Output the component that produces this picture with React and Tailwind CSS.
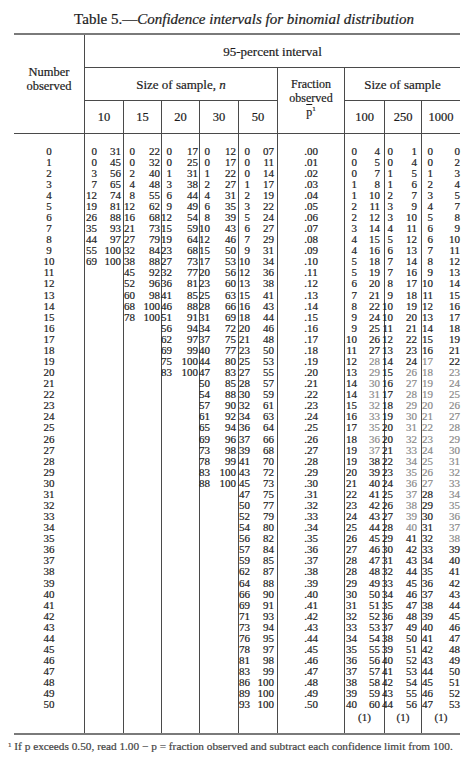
import React from 'react'

// rows are "lower-upper" pairs, one per number observed
const parse = (s) => s.split(',').map((p) => p.split('-'))

const LEFT = [
  { n: '10', slot: 12, pr: 2, data: parse('0-31,0-45,3-56,7-65,12-74,19-81,26-88,35-93,44-97,55-100,69-100') },
  { n: '15', slot: 11, pr: 1, data: parse('0-22,0-32,2-40,4-48,8-55,12-62,16-68,21-73,27-79,32-84,38-88,45-92,52-96,60-98,68-100,78-100') },
  { n: '20', slot: 10, pr: 1, data: parse('0-17,0-25,1-31,3-38,6-44,9-49,12-54,15-59,19-64,23-68,27-73,32-77,36-81,41-85,46-88,51-91,56-94,62-97,69-99,75-100,83-100') },
  { n: '30', slot: 10, pr: 2, data: parse('0-12,0-17,1-22,2-27,4-31,6-35,8-39,10-43,12-46,15-50,17-53,20-56,23-60,25-63,28-66,31-69,34-72,37-75,40-77,44-80,47-83,50-85,54-88,57-90,61-92,65-94,69-96,73-98,78-99,83-100,88-100') },
  { n: '50', slot: 11, pr: 3, data: parse('0-07,0-11,0-14,1-17,2-19,3-22,5-24,6-27,7-29,9-31,10-34,12-36,13-38,15-41,16-43,18-44,20-46,21-48,23-50,25-53,27-55,28-57,30-59,32-61,34-63,36-64,37-66,39-68,41-70,43-72,45-73,47-75,50-77,52-79,54-80,56-82,57-84,59-85,62-87,64-88,66-90,69-91,71-93,73-94,76-95,78-97,81-98,83-99,86-100,89-100,93-100') },
]

// fade = row ranges where the print came out pale
const RIGHT = [
  { n: '100', slot: 12, pr: 4, fadeHi: [19, 27], data: parse('0-4,0-5,0-7,1-8,1-10,2-11,2-12,3-14,4-15,4-16,5-18,5-19,6-20,7-21,8-22,9-24,9-25,10-26,11-27,12-28,13-29,14-30,14-31,15-32,16-33,17-35,18-36,19-37,19-38,20-39,21-40,22-41,23-42,24-43,25-44,26-45,27-46,28-47,28-48,29-49,30-50,31-51,32-52,33-53,34-54,35-55,36-56,37-57,38-58,39-59,40-60') },
  { n: '250', slot: 8, pr: 4, fadeHi: [20, 34], data: parse('0-1,0-4,1-5,1-6,2-7,3-9,3-10,4-11,5-12,6-13,7-14,7-16,8-17,9-18,10-19,10-20,11-21,12-22,13-23,14-24,15-26,16-27,17-28,18-29,19-30,20-31,20-32,21-33,22-34,23-35,24-36,25-37,26-38,27-39,28-40,29-41,30-42,31-43,32-44,33-45,34-46,35-47,36-48,37-49,38-50,39-51,40-52,41-53,42-54,43-55,44-56') },
  { n: '1000', slot: 11, pr: 0, fadeLo: [19, 30], fadeHi: [20, 35], data: parse('0-0,0-2,1-3,2-4,3-5,4-7,5-8,6-9,6-10,7-11,8-12,9-13,10-14,11-15,12-16,13-17,14-18,15-19,16-21,17-22,18-23,19-24,19-25,20-26,21-27,22-28,23-29,24-30,25-31,26-32,27-33,28-34,29-35,30-36,31-37,32-38,33-39,34-40,35-41,36-42,37-43,38-44,39-45,40-46,41-47,42-48,43-49,44-50,45-51,46-52,47-53') },
]

const ROWS = Array.from({ length: 51 }, (_, i) => i)

const inRange = (r, i) => r && i >= r[0] && i <= r[1]

function SampleColumn({ col, note }) {
  return (
    <div className="row-start-4 border-t border-l border-[#4a4a4a] pt-[11.5px]">
      {col.data.map(([lo, hi], i) => (
        <div key={i} className="flex h-[11.08px] leading-[11.08px]" style={{ paddingRight: col.pr }}>
          <span className={`flex justify-end shrink-0 ${inRange(col.fadeLo, i) ? 'text-[#8a8a8a]' : ''}`} style={{ width: col.slot }}>{lo}</span>
          <span className={`ml-auto ${inRange(col.fadeHi, i) ? 'text-[#8a8a8a]' : ''}`}>{hi}</span>
        </div>
      ))}
      {note && <div className="mt-[2px] text-center leading-[11px]">(1)</div>}
    </div>
  )
}

export default function App() {
  return (
    <div className="w-[474px] h-[757px] bg-white text-[#1c1c1c] font-['Liberation_Serif',serif] overflow-hidden [-webkit-text-stroke:0.2px]">
      <div className="h-[33px] pt-[11px] pl-[14px] text-center text-[15px] leading-[16px]">
        Table 5.—<span className="italic">Confidence intervals for binomial distribution</span>
      </div>

      <div className="ml-[14px] w-[446px] grid grid-cols-[70px_39px_38px_38px_39px_39px_67px_40px_37px_39px] grid-rows-[33px_33px_32px_600px] border-t-2 border-b-2 border-[#7a7a7a] text-[11px]">
        <div className="col-start-1 row-start-1 row-span-3 flex flex-col items-center justify-center pb-[11px] text-[12.5px] leading-[14px]">
          <span>Number</span>
          <span>observed</span>
        </div>
        <div className="col-start-2 col-span-9 row-start-1 border-l border-b border-[#4a4a4a] flex items-center justify-center pt-[2px] text-[13px]">
          95-percent interval
        </div>
        <div className="col-start-2 col-span-5 row-start-2 border-l border-b border-[#4a4a4a] flex items-center justify-center pt-[2px] text-[13px]">
          <span>Size of sample, <span className="italic">n</span></span>
        </div>
        <div className="col-start-7 row-start-2 row-span-2 border-l border-[#4a4a4a] flex flex-col items-center pt-[9px] text-[12px] leading-[14px]">
          <span>Fraction</span>
          <span>observed</span>
          <span className="leading-[14px]"><span className="overline">p</span><span className="align-top text-[7px] leading-[8px]">1</span></span>
        </div>
        <div className="col-start-8 col-span-3 row-start-2 border-l border-b border-[#4a4a4a] flex items-center justify-center pt-[2px] text-[13px]">
          Size of sample
        </div>
        {LEFT.map((c, i) => (
          <div key={c.n} className="row-start-3 border-l border-[#4a4a4a] flex items-center justify-center text-[12.5px]" style={{ gridColumnStart: i + 2 }}>
            {c.n}
          </div>
        ))}
        {RIGHT.map((c, i) => (
          <div key={c.n} className="row-start-3 border-l border-[#4a4a4a] flex items-center justify-center text-[12.5px]" style={{ gridColumnStart: i + 8 }}>
            {c.n}
          </div>
        ))}

        <div className="row-start-4 col-start-1 border-t border-[#4a4a4a] pt-[11.5px] text-center">
          {ROWS.map((r) => (
            <div key={r} className="h-[11.08px] leading-[11.08px]">{r}</div>
          ))}
        </div>
        {LEFT.map((c) => (
          <SampleColumn key={c.n} col={c} />
        ))}
        <div className="row-start-4 border-t border-l border-[#4a4a4a] pt-[11.5px] text-center">
          {ROWS.map((r) => (
            <div key={r} className="h-[11.08px] leading-[11.08px]">.{String(r).padStart(2, '0')}</div>
          ))}
        </div>
        {RIGHT.map((c) => (
          <SampleColumn key={c.n} col={c} note />
        ))}
      </div>

      <div className="mt-[5px] pl-[8px] text-[11.3px] leading-[12px] text-[#444] whitespace-nowrap">
        <sup className="text-[7px]">1</sup> If p exceeds 0.50, read 1.00 − p = fraction observed and subtract each confidence limit from 100.
      </div>
    </div>
  )
}
